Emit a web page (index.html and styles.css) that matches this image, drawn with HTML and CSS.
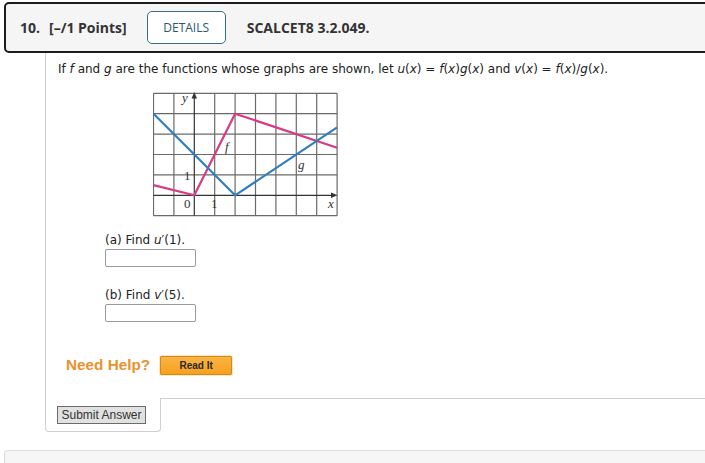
FILE: index.html
```html
<!DOCTYPE html>
<html>
<head>
<meta charset="utf-8">
<link rel="stylesheet" href="styles.css">
</head>
<body>
<div class="question">
  <div class="qhead">
    <span class="qnum">10.</span>
    <span class="qpoints">[–/1 Points]</span>
    <button class="details">DETAILS</button>
    <span class="qid">SCALCET8 3.2.049.</span>
  </div>
  <div class="qbody">
    <div class="qcontent">
      <p class="prompt">If <i>f</i> and <i>g</i> are the functions whose graphs are shown, let <i>u</i>(<i>x</i>) = <i>f</i>(<i>x</i>)<i>g</i>(<i>x</i>) and <i>v</i>(<i>x</i>) = <i>f</i>(<i>x</i>)/<i>g</i>(<i>x</i>).</p>
      <div class="graph">
        <svg width="185" height="127" viewBox="0 0 185 127">
          <rect x="0" y="0" width="185" height="127" fill="#fff"/>
          <g stroke="#6a6a6a" stroke-width="1.2" fill="none">
            <line x1="0.5" y1="2.3" x2="0.5" y2="124.7"/>
            <line x1="20.9" y1="2.3" x2="20.9" y2="124.7"/>
            <line x1="61.7" y1="2.3" x2="61.7" y2="124.7"/>
            <line x1="82.1" y1="2.3" x2="82.1" y2="124.7"/>
            <line x1="102.5" y1="2.3" x2="102.5" y2="124.7"/>
            <line x1="122.9" y1="2.3" x2="122.9" y2="124.7"/>
            <line x1="143.3" y1="2.3" x2="143.3" y2="124.7"/>
            <line x1="163.7" y1="2.3" x2="163.7" y2="124.7"/>
            <line x1="184.1" y1="2.3" x2="184.1" y2="124.7"/>
            <line x1="0.5" y1="2.3" x2="184.1" y2="2.3"/>
            <line x1="0.5" y1="22.7" x2="184.1" y2="22.7"/>
            <line x1="0.5" y1="43.1" x2="184.1" y2="43.1"/>
            <line x1="0.5" y1="63.5" x2="184.1" y2="63.5"/>
            <line x1="0.5" y1="83.9" x2="184.1" y2="83.9"/>
            <line x1="0.5" y1="124.7" x2="184.1" y2="124.7"/>
          </g>
          <g stroke="#333" stroke-width="1.2">
            <line x1="41.3" y1="4" x2="41.3" y2="124.7"/>
            <line x1="0.5" y1="104.3" x2="181" y2="104.3"/>
          </g>
          <polygon points="41.3,1 38.6,7.5 44,7.5" fill="#333"/>
          <polygon points="184.5,104.3 178,101.6 178,107" fill="#333"/>
          <polyline points="0.5,94.1 41.3,104.3 82.1,22.7 184.1,56.7" fill="none" stroke="#d83a86" stroke-width="2.2" stroke-linejoin="round"/>
          <polyline points="0.5,22.7 82.1,104.3 184.1,36.3" fill="none" stroke="#2f7ec0" stroke-width="2.2" stroke-linejoin="round"/>
          <g font-family="'Liberation Serif', serif" font-size="13" fill="#333">
            <text x="29" y="11" font-style="italic">y</text>
            <text x="72" y="60" font-style="italic">f</text>
            <text x="145" y="78" font-style="italic">g</text>
            <text x="31" y="89">1</text>
            <text x="31" y="117">0</text>
            <text x="58" y="117">1</text>
            <text x="175" y="117" font-style="italic">x</text>
          </g>
        </svg>
      </div>
      <div class="part part-a">
        <div class="part-label">(a) Find <i>u</i>′(1).</div>
        <input class="answer" type="text">
      </div>
      <div class="part part-b">
        <div class="part-label">(b) Find <i>v</i>′(5).</div>
        <input class="answer" type="text">
      </div>
      <div class="help">
        <span class="help-title">Need Help?</span>
        <button class="read-it">Read It</button>
      </div>
    </div>
    <div class="qfoot">
      <div class="submit-tab"><button class="submit">Submit Answer</button></div>
      <div class="foot-rest"></div>
    </div>
  </div>
</div>
<div class="next-question"></div>
</body>
</html>
```

FILE: styles.css
```css
html, body {
  margin: 0;
  padding: 0;
  overflow: hidden;
  background: #fff;
}

body {
  width: 705px;
  height: 463px;
  font-family: "DejaVu Sans", Verdana, sans-serif;
  color: #222;
}

.question {
  padding-top: 2px;
}

.qhead {
  margin-left: 4px;
  margin-right: -20px;
  height: 47px;
  border: 2px solid #1c1c1c;
  border-radius: 5px;
  background: #f5f5f5;
  display: flex;
  align-items: center;
  padding-left: 14px;
  font-family: "Open Sans", sans-serif;
  font-weight: 700;
  font-size: 14px;
  color: #333;
}

.qnum {
  margin-right: 9px;
}

.details {
  margin-left: 20px;
  width: 79px;
  height: 33px;
  border: 1px solid #3a6e7b;
  border-radius: 5px;
  background: #fff;
  font-family: "Open Sans", sans-serif;
  font-size: 12px;
  font-weight: 400;
  color: #2a5868;
  padding: 0;
}

.qid {
  margin-left: 21px;
}

.qbody {
  margin-left: 45px;
}

.qcontent {
  border-left: 1px solid #cfcfcf;
  padding: 8px 0 23px 12px;
}

.prompt {
  margin: 0;
  font-size: 12px;
  line-height: 16px;
  color: #222;
}

.graph {
  margin: 14px 0 0 95px;
  height: 127px;
}

.graph svg {
  display: block;
}

.part {
  margin-left: 47px;
}

.part-a {
  margin-top: 14px;
}

.part-b {
  margin-top: 20px;
}

.part-label {
  font-size: 12px;
  line-height: 16px;
  color: #222;
}

.answer {
  display: block;
  margin-top: 1px;
  width: 91px;
  height: 18px;
  box-sizing: border-box;
  border: 1px solid #9a9a9a;
  border-radius: 2px;
  padding: 0;
  background: #fff;
}

.help {
  margin: 33px 0 0 8px;
  display: flex;
  align-items: center;
  height: 20px;
}

.help-title {
  font-family: "Liberation Sans", Arial, sans-serif;
  font-weight: 700;
  font-size: 15.3px;
  color: #ec912f;
}

.read-it {
  margin-left: 10px;
  width: 72px;
  height: 19px;
  padding: 0;
  border: 1px solid #cf8a22;
  border-radius: 1px;
  background: linear-gradient(#fbb443, #f5a11e);
  box-shadow: 0 0 0 1px #fde6c0;
  font-family: "Liberation Sans", Arial, sans-serif;
  font-weight: 700;
  font-size: 10px;
  color: #2a2a2a;
}

.qfoot {
  display: flex;
}

.submit-tab {
  width: 103px;
  padding: 8px 0 7px 11px;
  border: 1px solid #cfcfcf;
  border-top: none;
  border-radius: 0 0 4px 4px;
}

.submit {
  display: block;
  width: 89px;
  height: 18px;
  padding: 0;
  border: 1px solid #6b6b6b;
  border-radius: 0;
  background: #e1e1e1;
  font-family: "Liberation Sans", Arial, sans-serif;
  font-size: 12px;
  color: #333;
}

.foot-rest {
  flex: 1;
  border-top: 1px solid #cfcfcf;
}

.next-question {
  margin: 18px -20px 0 4px;
  height: 13px;
  border: 1px solid #dcdcdc;
  border-bottom: none;
  border-radius: 4px 4px 0 0;
  background: #f6f6f6;
}
```
